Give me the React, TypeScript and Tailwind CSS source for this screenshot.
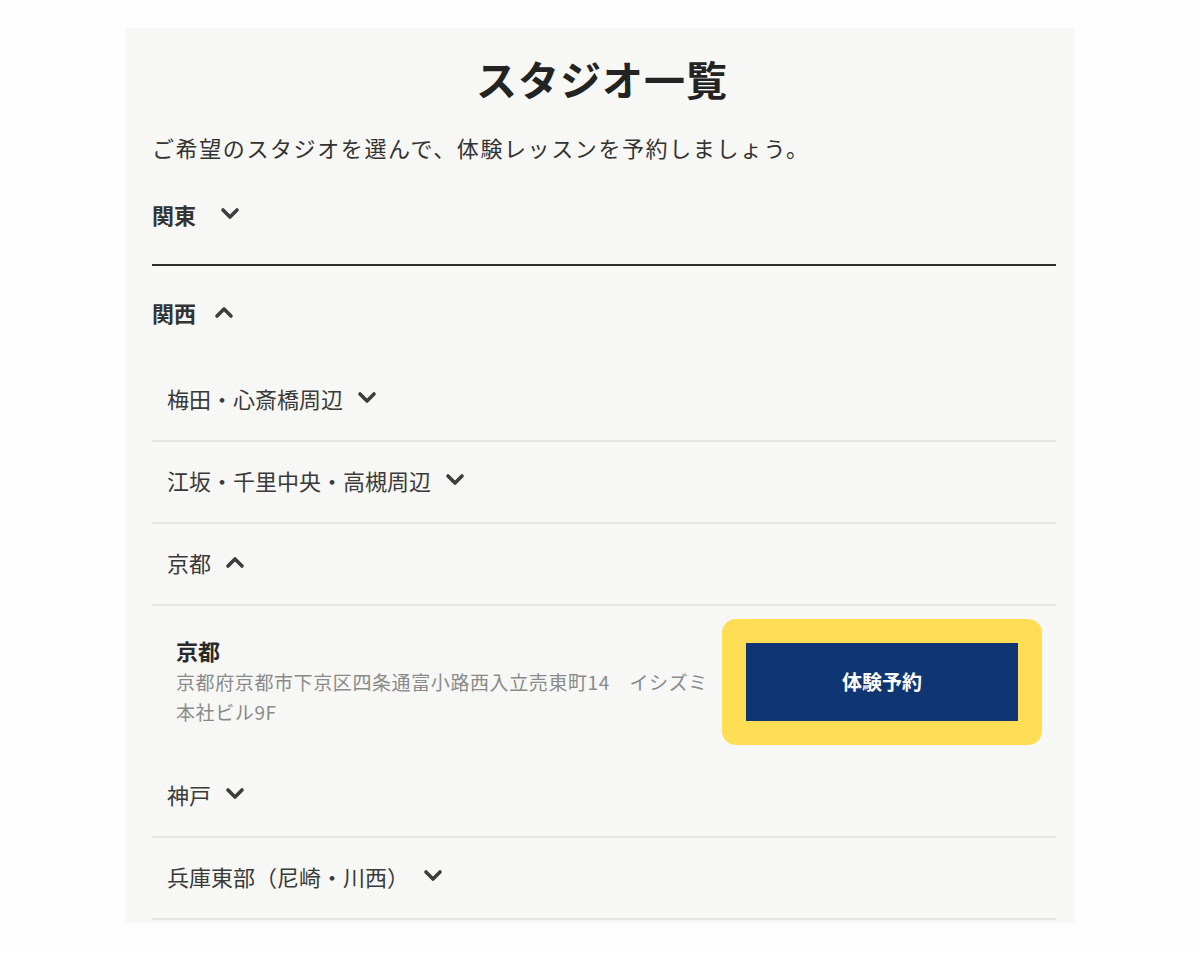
import React, { useState } from 'react';

type Studio = { name: string; address: string[] };
type Area = { id: string; label: string; studios?: Studio[] };

const kansaiAreas: Area[] = [
  { id: 'umeda', label: '梅田・心斎橋周辺' },
  { id: 'esaka', label: '江坂・千里中央・高槻周辺' },
  {
    id: 'kyoto',
    label: '京都',
    studios: [
      {
        name: '京都',
        address: ['京都府京都市下京区四条通富小路西入立売東町14　イシズミ', '本社ビル9F'],
      },
    ],
  },
  { id: 'kobe', label: '神戸' },
  { id: 'hyogo', label: '兵庫東部（尼崎・川西）' },
];

function Chevron({ up = false, className = '' }: { up?: boolean; className?: string }) {
  return (
    <svg
      viewBox="0 0 20 14"
      className={`w-[20px] h-[14px] text-[#3d3d3d] ${className}`}
      fill="none"
      stroke="currentColor"
      strokeWidth={3.6}
      strokeLinecap="round"
      strokeLinejoin="round"
    >
      {up ? <polyline points="3,11 10,4 17,11" /> : <polyline points="3,3 10,10 17,3" />}
    </svg>
  );
}

export default function App() {
  const [kantoOpen, setKantoOpen] = useState(false);
  const [kansaiOpen, setKansaiOpen] = useState(true);
  const [openArea, setOpenArea] = useState<string | null>('kyoto');

  return (
    <div
      className="min-h-[953px] bg-[#fdfdfd] pt-[28px]"
      style={{ fontFamily: '"Noto Sans CJK JP", "Noto Sans", sans-serif' }}
    >
      <div className="mx-auto w-[948px] bg-[#f7f7f5] pl-[26px] pr-[18px] pb-[3px]">
        {/* Title */}
        <div className="h-[110px] pb-[8px] flex items-center justify-center">
          <h1 className="text-[41px] font-bold text-[#232323] tracking-[1px] ml-[-4px]">スタジオ一覧</h1>
        </div>
        <div className="h-[18px] flex items-center">
          <p className="text-[22px] text-[#333] tracking-[1.6px] whitespace-nowrap">
            ご希望のスタジオを選んで、体験レッスンを予約しましょう。
          </p>
        </div>

        {/* 関東 */}
        <div className="border-b-2 border-[#2e2e2e] pt-[23px] pb-[15px]">
          <button
            onClick={() => setKantoOpen(!kantoOpen)}
            className="h-[70px] flex items-center gap-[24px] text-[22px] font-bold text-[#333]"
          >
            関東
            <Chevron up={kantoOpen} />
          </button>
        </div>

        {/* 関西 */}
        <div>
          <button
            onClick={() => setKansaiOpen(!kansaiOpen)}
            className="h-[94px] pb-[2px] flex items-center gap-[18px] text-[22px] font-bold text-[#333]"
          >
            関西
            <Chevron up={kansaiOpen} />
          </button>

          {kansaiOpen &&
            kansaiAreas.map((area) => {
              const open = openArea === area.id;
              return (
                <div key={area.id}>
                  <div className="border-b-2 border-[#e6e6e4] h-[82px] flex items-center pb-[4px] pl-[15px]">
                    <button
                      onClick={() => setOpenArea(open ? null : area.id)}
                      className="flex items-center gap-[14px] text-[22px] text-[#3a3a3a]"
                    >
                      {area.label}
                      <Chevron up={open} />
                    </button>
                  </div>
                  {open && area.studios && (
                    <div className="pt-[13px] pb-[11px]">
                      {area.studios.map((s) => (
                        <div key={s.name} className="flex items-start justify-between pl-[24px] pr-[14px]">
                          <div className="pt-[14px]">
                            <div className="text-[22px] font-bold text-[#2a2a2a] leading-[34px]">{s.name}</div>
                            {s.address.map((line) => (
                              <div key={line} className="text-[19px] text-[#8a8a8a] leading-[30px] tracking-[0.6px]">
                                {line}
                              </div>
                            ))}
                          </div>
                          <div className="bg-[#ffdd55] rounded-[14px] p-[24px]">
                            <button className="w-[272px] h-[78px] bg-[#0f3572] text-white text-[20px] font-bold flex items-center justify-center">
                              体験予約
                            </button>
                          </div>
                        </div>
                      ))}
                    </div>
                  )}
                </div>
              );
            })}
        </div>
      </div>
    </div>
  );
}
